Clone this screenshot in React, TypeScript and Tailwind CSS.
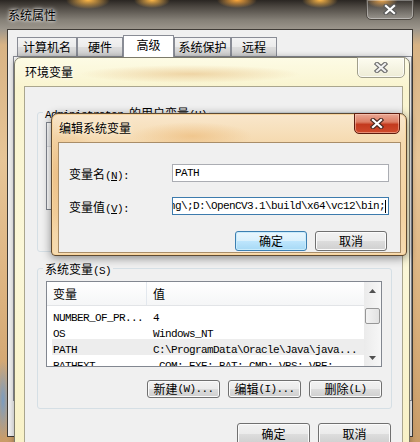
import React from "react";

const cjk = "font-['Noto_Sans_CJK_SC',sans-serif] text-[12px] leading-[14px]";
const mono = "font-['Liberation_Mono',monospace] text-[11px] leading-[14px] tracking-[-0.6px]";

const CJK_RE = /[\u2e80-\u9fff\u3000-\u303f\uff00-\uffef]/;

function T({ s }: { s: string }) {
  const runs: { s: string; c: boolean }[] = [];
  for (const ch of s) {
    const c = CJK_RE.test(ch);
    const last = runs[runs.length - 1];
    if (last && last.c === c) last.s += ch;
    else runs.push({ s: ch, c });
  }
  return (
    <>
      {runs.map((r, i) => (
        <span key={i} className={r.c ? cjk : mono}>
          {r.s}
        </span>
      ))}
    </>
  );
}

function CloseX({ dark, fill }: { dark: string; fill: string }) {
  return (
    <svg width="14" height="11" viewBox="0 0 14 11">
      <path d="M3 2 L11 9 M11 2 L3 9" stroke={dark} strokeWidth="4.4" strokeLinecap="square" />
      <path d="M3 2 L11 9 M11 2 L3 9" stroke={fill} strokeWidth="2.2" strokeLinecap="square" />
    </svg>
  );
}

const btnBase =
  "flex items-center justify-center rounded-[3px] border text-black whitespace-nowrap";
const btnNormal =
  "border-[#707070] bg-[linear-gradient(to_bottom,#f2f2f2_0%,#ebebeb_50%,#dddddd_50%,#cfcfcf_100%)] shadow-[inset_0_0_0_1px_#fbfbfb]";
const btnDefault =
  "border-[#3c7fb1] bg-[linear-gradient(to_bottom,#eaf6fd_0%,#d9f0fc_50%,#bee6fd_50%,#a7d9f5_100%)] shadow-[inset_0_0_0_1px_#c9ebfb]";

function Arrow({ up }: { up: boolean }) {
  return (
    <svg width="7" height="4" viewBox="0 0 7 4">
      <path d={up ? "M0 4 L3.5 0 L7 4 Z" : "M0 0 L3.5 4 L7 0 Z"} fill="#505050" />
    </svg>
  );
}

function ListView({ rows, tall }: { rows: [string, string][]; tall: boolean }) {
  return (
    <div
      className={`flex w-[336px] ${tall ? "h-[88px]" : "h-[86px]"} border border-[#828790] bg-white overflow-hidden`}
    >
      <div className="flex-1 flex flex-col min-w-0">
        <div className="h-[24px] shrink-0 flex border-b border-[#e2e4e7] bg-[linear-gradient(to_bottom,#ffffff,#f5f6f7)]">
          <div className="w-[100px] border-r border-[#e3e8ee] pl-[6px] flex items-center">
            <span className={cjk}>变量</span>
          </div>
          <div className="flex-1 pl-[6px] flex items-center">
            <span className={cjk}>值</span>
          </div>
        </div>
        <div className="pt-[1px]">
          {rows.map(([a, b], i) => (
            <div
              key={i}
              className={`h-[16px] flex items-center ml-[5px] whitespace-nowrap ${i === 2 ? "bg-[#ededed]" : ""}`}
            >
              <div className="w-[95px] pl-[1px] text-black">
                <span className={mono}>{a}</span>
              </div>
              <div className="pl-[6px] text-black">
                <span className={mono}>{b}</span>
              </div>
            </div>
          ))}
        </div>
      </div>
      <div className="w-[17px] flex flex-col bg-[linear-gradient(to_right,#ebebeb,#f7f7f7)]">
        <div className="h-[17px] flex items-center justify-center">
          <Arrow up />
        </div>
        <div className="flex-1">
          <div className="mt-[9px] mx-[1px] h-[16px] rounded-[2px] border border-[#979797] bg-[linear-gradient(to_right,#f3f3f3,#e2e2e2)]" />
        </div>
        <div className="h-[14px] flex items-start justify-center pt-[4px]">
          <Arrow up={false} />
        </div>
      </div>
    </div>
  );
}

export default function App() {
  const sysRows: [string, string][] = [
    ["NUMBER_OF_PR...", "4"],
    ["OS", "Windows_NT"],
    ["PATH", "C:\\ProgramData\\Oracle\\Java\\java..."],
    ["PATHEXT", ".COM;.EXE;.BAT;.CMD;.VBS;.VBE;..."],
  ];
  const userRows: [string, string][] = [
    ["TEMP", "%USERPROFILE%\\AppData\\Local\\Temp"],
    ["TMP", "%USERPROFILE%\\AppData\\Local\\Temp"],
  ];

  const tabs: { label: string; w: string; sel?: boolean }[] = [
    { label: "计算机名", w: "w-[60px]" },
    { label: "硬件", w: "w-[46px]" },
    { label: "高级", w: "w-[51px]", sel: true },
    { label: "系统保护", w: "w-[57px]" },
    { label: "远程", w: "w-[46px]" },
  ];

  return (
    <div className="relative w-[420px] h-[442px] overflow-hidden bg-[radial-gradient(22px_9px_at_88px_0px,#ffb847,transparent),radial-gradient(18px_8px_at_152px_0px,#ffb847,transparent),radial-gradient(20px_8px_at_237px_0px,#ffa93b,transparent),radial-gradient(18px_8px_at_320px_0px,#ffb847,transparent),radial-gradient(16px_8px_at_382px_0px,#f0a545,transparent),radial-gradient(8px_40px_at_3px_400px,#7a9cc0,transparent),linear-gradient(to_bottom,#2a2622_0px,#4d4842_7px,#858077_20px,#9c968c_29px,#d8b384_45px,#e7c597_160px,#dcb27e_300px,#c99c68_442px)]">
      {/* Outer window: 系统属性 */}
      <div className="flex flex-col h-full">
        <div className="h-[29px] shrink-0 flex items-center pl-[8px]">
          <span className={`${cjk} text-black [text-shadow:0_0_5px_#ffffff,0_0_3px_#ffffff]`}>系统属性</span>
        </div>
        <div className="ml-[7px] w-[406px] h-[408px] border border-[#3f3b36] bg-[#f0f0f0] flex flex-col">
          <div className="h-[26px] flex items-end pl-[9px] shrink-0">
            {tabs.map((t) => (
              <div
                key={t.label}
                className={`${t.w} flex items-center justify-center border-t border-l border-r border-[#898c95] ${
                  t.sel
                    ? "h-[22px] bg-white -mb-px z-10 pb-[3px]"
                    : "h-[19px] bg-[linear-gradient(to_bottom,#f3f3f3_0%,#ebebeb_50%,#dddddd_50%,#cfcfcf_100%)]"
                } text-black`}
              >
                <span className={cjk}>{t.label}</span>
              </div>
            ))}
          </div>
          <div className="ml-[5px] w-[399px] h-[345px] border border-[#898c95] bg-white" />
        </div>
      </div>

      {/* outer close (inactive glass) */}
      <div className="absolute top-[-1px] right-[6px] w-[48px] h-[21px] rounded-b-[5px] border border-[#4f4a44] shadow-[inset_0_0_0_1px_rgba(255,255,255,0.35)] bg-[linear-gradient(to_bottom,rgba(255,255,255,0.05),rgba(255,255,255,0.18))] flex items-center justify-center">
        <CloseX dark="#5a5a5a" fill="#ffffff" />
      </div>

      {/* 环境变量 window */}
      <div className="absolute left-[14px] top-[57px] w-[396px] h-[400px] rounded-t-[7px] border border-[#7c7a69] shadow-[0_0_6px_rgba(0,0,0,0.3)] bg-[radial-gradient(110px_9px_at_175px_16px,rgba(224,170,100,0.45),transparent),linear-gradient(to_bottom,#fdfbe5_0px,#f9f4cf_30px,#fbf7d8_200px,#f8f1c6_400px)] flex flex-col">
        <div className="h-[28px] shrink-0 flex items-center pl-[10px]">
          <span className={`${cjk} text-black [text-shadow:0_0_4px_#ffffff]`}>环境变量</span>
        </div>
        <div className="absolute top-[-1px] right-[4px] w-[48px] h-[21px] rounded-b-[5px] border border-[#a19f8c] bg-[linear-gradient(to_bottom,#fdfcf0,#eeecd6)] shadow-[inset_0_0_0_1px_rgba(255,255,255,0.7)] flex items-center justify-center">
          <CloseX dark="#6e6e6e" fill="#f2f2f2" />
        </div>
        <div className="ml-[9px] w-[379px] flex-1 border border-[#aaa68e] bg-[#f0f0f0] flex flex-col text-black">
          <fieldset className="ml-[12px] mt-[18px] w-[355px] h-[147px] rounded-[3px] border border-[#d5dfe5] pl-[5px] shrink-0">
            <legend className="px-[2px] h-[14px] leading-[14px] whitespace-nowrap">
              <T s="Administrator 的用户变量(U)" />
            </legend>
            <div className="ml-[3px] mt-[3px]">
              <ListView rows={userRows} tall />
            </div>
          </fieldset>
          <fieldset className="ml-[12px] mt-[9px] w-[355px] h-[148px] rounded-[3px] border border-[#d5dfe5] pl-[5px] shrink-0">
            <legend className="px-[2px] h-[14px] leading-[14px] whitespace-nowrap">
              <T s="系统变量(S)" />
            </legend>
            <div className="ml-[3px] mt-[6px] w-[336px]">
              <ListView rows={sysRows} tall={false} />
              <div className="mt-[13px] flex justify-end gap-[8px]">
                <div className={`${btnBase} ${btnNormal} w-[73px] h-[18px]`}>
                  <T s="新建(W)..." />
                </div>
                <div className={`${btnBase} ${btnNormal} w-[73px] h-[18px]`}>
                  <T s="编辑(I)..." />
                </div>
                <div className={`${btnBase} ${btnNormal} w-[73px] h-[18px]`}>
                  <T s="删除(L)" />
                </div>
              </div>
            </div>
          </fieldset>
          <div className="mt-[14px] pr-[11px] flex justify-end gap-[8px]">
            <div className={`${btnBase} ${btnNormal} w-[73px] h-[22px]`}>
              <span className={cjk}>确定</span>
            </div>
            <div className={`${btnBase} ${btnNormal} w-[73px] h-[22px]`}>
              <span className={cjk}>取消</span>
            </div>
          </div>
        </div>
      </div>

      {/* 编辑系统变量 dialog */}
      <div className="absolute left-[51px] top-[113px] w-[356px] h-[143px] rounded-t-[7px] rounded-b-[4px] border border-[#5e4a33] shadow-[inset_0_0_0_1px_#f8d49c,0_2px_10px_rgba(0,0,0,0.45)] bg-[radial-gradient(60px_14px_at_140px_22px,rgba(235,180,110,0.55),transparent),radial-gradient(40px_60px_at_8px_60px,rgba(230,170,100,0.5),transparent),linear-gradient(to_bottom,#f9e7cc_0px,#f5dab0_28px,#f3d3a2_100px,#f6dcb3_143px)] flex flex-col">
        <div className="h-[28px] shrink-0 flex items-center pl-[7px]">
          <span className={`${cjk} text-black [text-shadow:0_0_5px_#fff6e6]`}>编辑系统变量</span>
        </div>
        <div className="absolute top-[-1px] right-[6px] w-[46px] h-[21px] rounded-b-[5px] border border-[#5e1c0f] bg-[linear-gradient(to_bottom,#eaa895_0%,#dc7d63_42%,#c33a1e_55%,#d04a2c_100%)] shadow-[inset_0_0_0_1px_rgba(255,210,190,0.5)] flex items-center justify-center">
          <CloseX dark="#4a2a22" fill="#ffffff" />
        </div>
        <div className="ml-[6px] w-[343px] h-[111px] border border-[#a98d68] bg-[#f0f0f0] flex flex-col text-black">
          <div className="mt-[18px] flex items-center pl-[10px]">
            <div className="w-[103px] whitespace-nowrap">
              <span className={cjk}>变量名</span>
              <span className={mono}>
                (<span className="underline">N</span>):
              </span>
            </div>
            <div className="w-[217px] h-[18px] border border-[#abadb3] bg-white flex items-center pl-[2px]">
              <span className={mono}>PATH</span>
            </div>
          </div>
          <div className="mt-[9px] flex items-center pl-[10px]">
            <div className="w-[103px] whitespace-nowrap">
              <span className={cjk}>变量值</span>
              <span className={mono}>
                (<span className="underline">V</span>):
              </span>
            </div>
            <div className="w-[217px] h-[18px] border border-[#3d7bad] bg-white flex items-center justify-end overflow-hidden whitespace-nowrap pr-[2px]">
              <span className={mono}>ng\;D:\OpenCV3.1\build\x64\vc12\bin;</span>
              <span className="w-px h-[13px] bg-black shrink-0" />
            </div>
          </div>
          <div className="mt-[13px] pr-[13px] flex justify-end gap-[8px]">
            <div className={`${btnBase} ${btnDefault} w-[72px] h-[20px]`}>
              <span className={cjk}>确定</span>
            </div>
            <div className={`${btnBase} ${btnNormal} w-[72px] h-[20px]`}>
              <span className={cjk}>取消</span>
            </div>
          </div>
        </div>
      </div>
    </div>
  );
}
